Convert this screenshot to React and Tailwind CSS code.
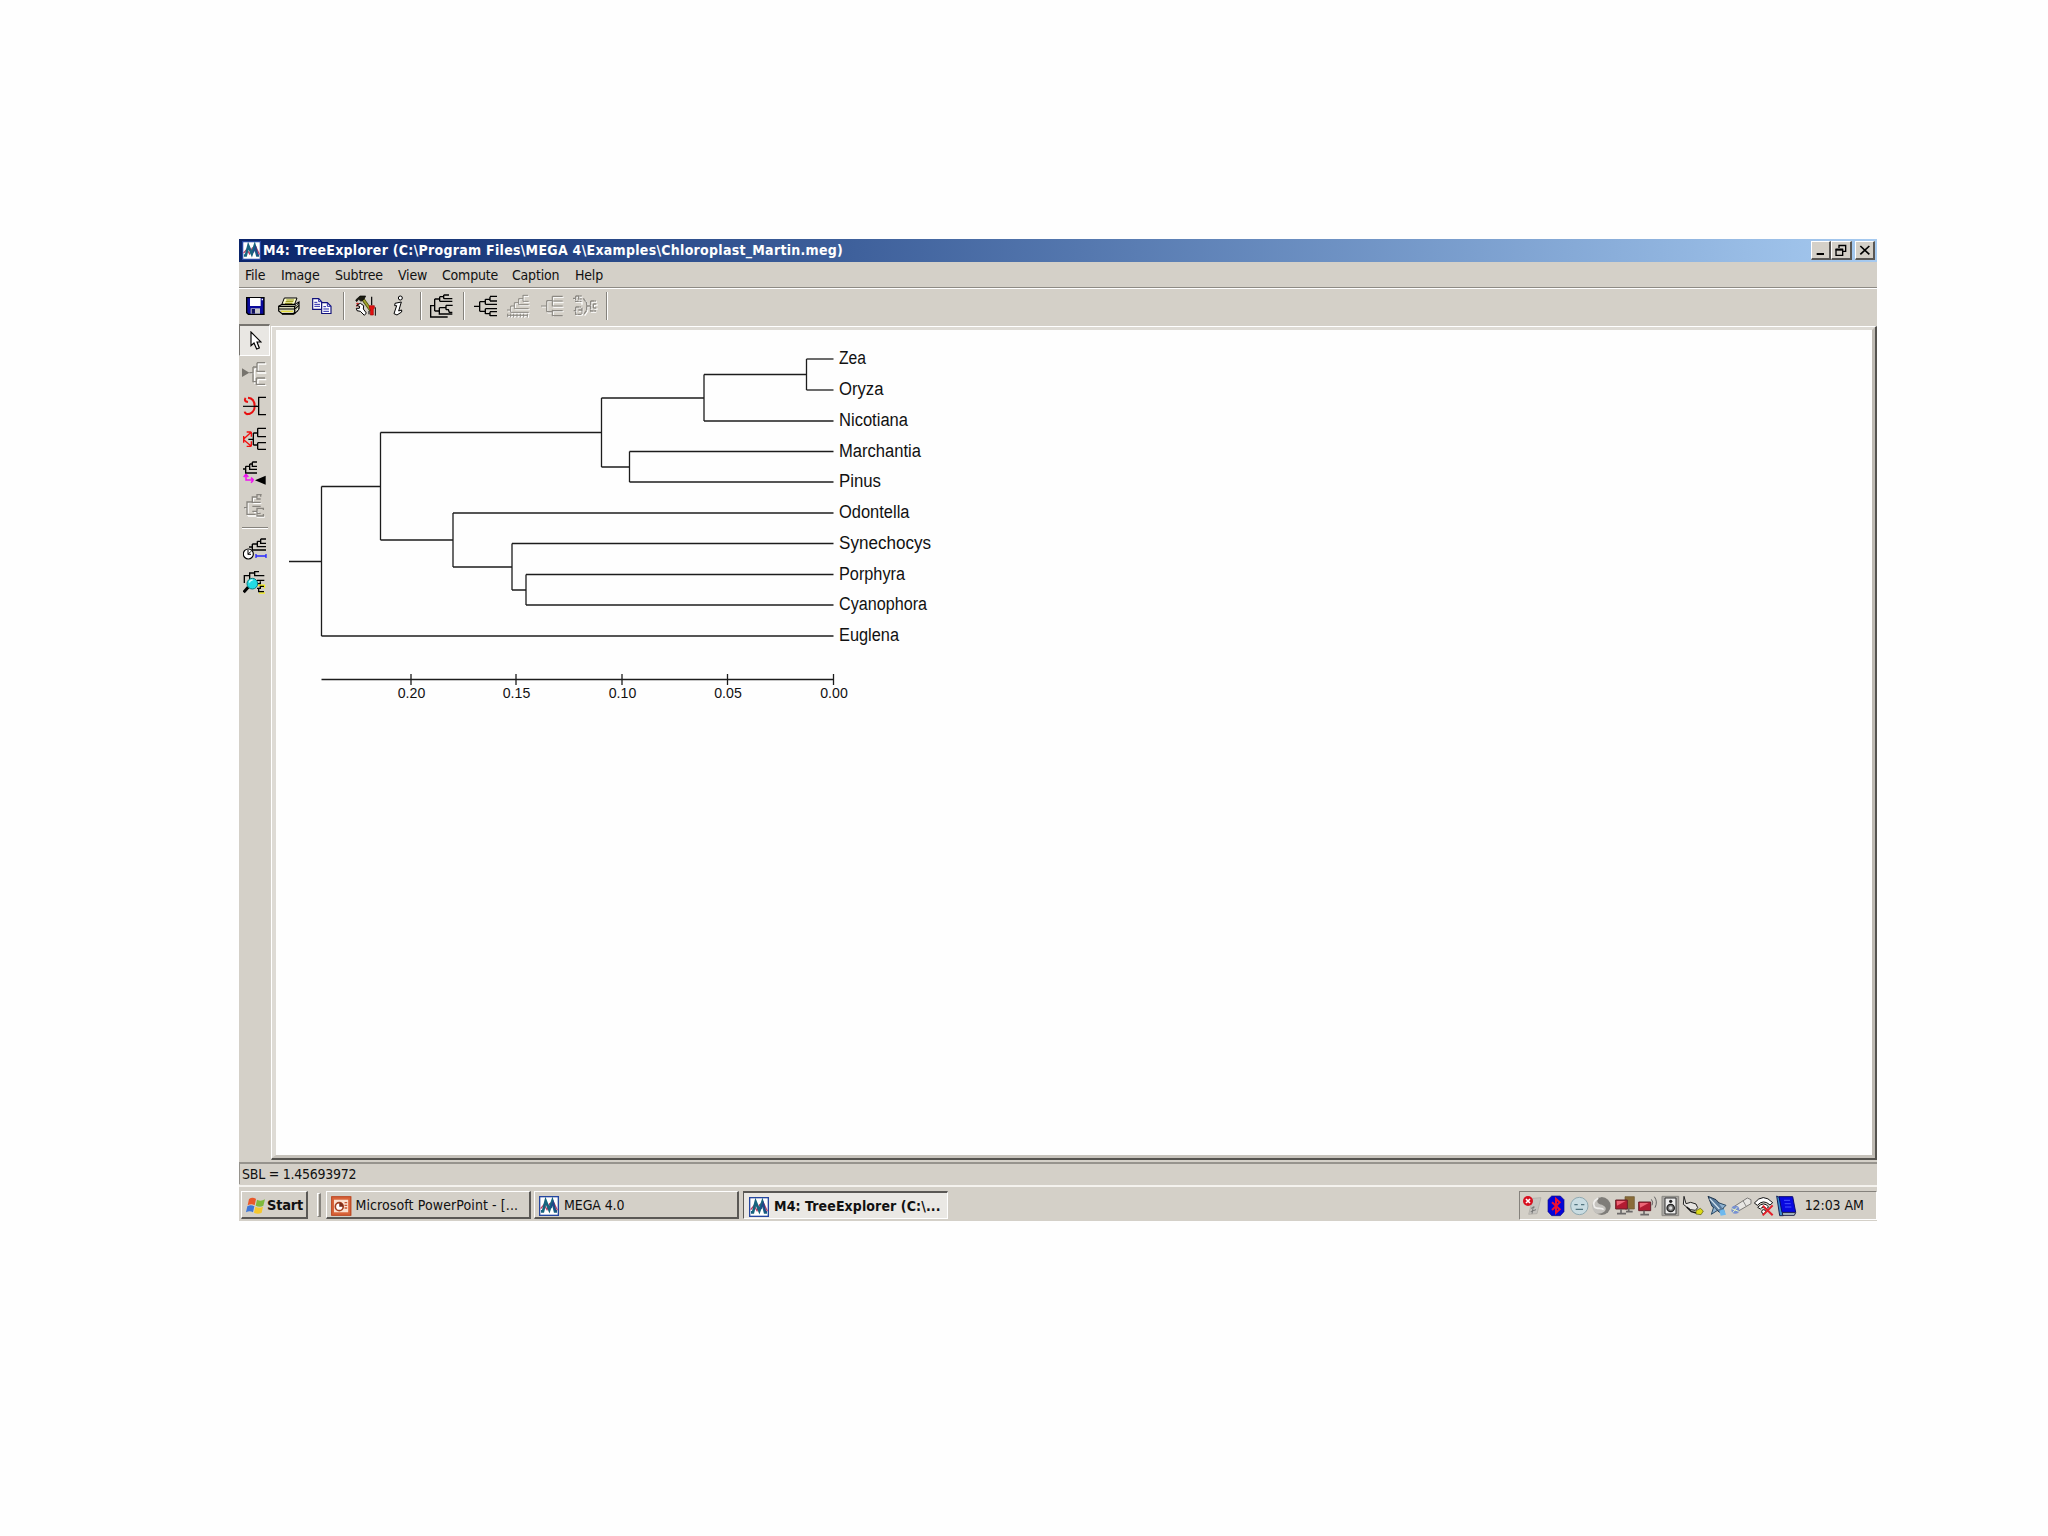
import React from 'react';

const menus = [
  { label: 'File', width: 'w-[36px]' },
  { label: 'Image', width: 'w-[54px]' },
  { label: 'Subtree', width: 'w-[63px]' },
  { label: 'View', width: 'w-[44px]' },
  { label: 'Compute', width: 'w-[70px]' },
  { label: 'Caption', width: 'w-[63px]' },
  { label: 'Help', width: 'w-[40px]' },
];

// Leaf rows of the tree: name, y of the branch, x where the branch starts
const taxa = [
  { name: 'Zea', y: 359, from: 806.5, length: 27 },
  { name: 'Oryza', y: 390, from: 806.5, length: 44.5 },
  { name: 'Nicotiana', y: 421, from: 704, length: 69 },
  { name: 'Marchantia', y: 451.5, from: 629.5, length: 82 },
  { name: 'Pinus', y: 482, from: 629.5, length: 42 },
  { name: 'Odontella', y: 513, from: 453, length: 70.5 },
  { name: 'Synechocys', y: 543.5, from: 512, length: 92 },
  { name: 'Porphyra', y: 574.5, from: 526, length: 66 },
  { name: 'Cyanophora', y: 605, from: 526, length: 88 },
  { name: 'Euglena', y: 636, from: 321.5, length: 60 },
];

// Inner nodes: vertical bar from top to bottom, stem running left to the parent
const nodes = [
  { x: 806.5, top: 359, bottom: 390, stem: 374.5, parent: 704 },
  { x: 704, top: 374.5, bottom: 421, stem: 398, parent: 601.5 },
  { x: 629.5, top: 451.5, bottom: 482, stem: 467, parent: 601.5 },
  { x: 601.5, top: 398, bottom: 467, stem: 432.5, parent: 380.5 },
  { x: 526, top: 574.5, bottom: 605, stem: 590, parent: 512 },
  { x: 512, top: 543.5, bottom: 590, stem: 567, parent: 453 },
  { x: 453, top: 513, bottom: 567, stem: 540, parent: 380.5 },
  { x: 380.5, top: 432.5, bottom: 540, stem: 486.5, parent: 321.5 },
  { x: 321.5, top: 486.5, bottom: 636, stem: 561.5, parent: 289 },
];

const ticks = [
  { x: 411, label: '0.20' },
  { x: 516, label: '0.15' },
  { x: 622, label: '0.10' },
  { x: 727.5, label: '0.05' },
  { x: 833.5, label: '0.00' },
];

// Icons are drawn on a grid of three units per pixel
const Icon = ({ w, h, children, className = '' }) => (
  <svg
    width={w / 3}
    height={h / 3}
    viewBox={`0 0 ${w} ${h}`}
    fill="none"
    stroke="#000"
    strokeWidth="4"
    className={`block shrink-0 ${className}`}
  >
    {children}
  </svg>
);

const SaveIcon = () => (
  <Icon w={56} h={54}>
    <path d="M2 2H54V52H7L2 47Z" fill="#0a0a9c" />
    <path d="M12 3H44V27H12Z" fill="#fff" stroke="none" />
    <path d="M14 34H42V50H14Z" fill="#c8c8c8" stroke="none" />
    <path d="M17 36H27V50H17Z" fill="#101060" stroke="none" />
    <path d="M47 5H51V10H47Z" fill="#fff" stroke="none" />
  </Icon>
);

const PrintIcon = () => (
  <Icon w={66} h={56}>
    <path d="M19 3H57L49 24H11Z" fill="#ffffd0" strokeWidth="3" />
    <path d="M25 9H48M23 14H46M21 19H43" stroke="#909000" strokeWidth="3" />
    <path d="M2 28L12 22H52L63 15V35L49 50H12L2 42Z" fill="#d8d8b8" strokeWidth="3.5" />
    <path d="M2 28H50L63 17M50 28V50M3 36H50M52 35L63 25" strokeWidth="3.5" />
    <path d="M9 43H45" stroke="#e4dc20" strokeWidth="3" />
    <path d="M12 51H46L60 39" strokeWidth="5" />
    <path d="M53 24L58 20M53 44L60 36" stroke="#fff" strokeWidth="3" />
  </Icon>
);

const CopyIcon = () => (
  <Icon w={60} h={50}>
    <path d="M2 2H20L29 11V34H2Z" fill="#fff" stroke="#111178" strokeWidth="3.5" />
    <path d="M20 2V11H29M7 13H16M7 19H24M7 25H24" stroke="#2424a8" strokeWidth="3" />
    <path d="M29 14H46L57 25V47H29Z" fill="#fff" stroke="#111178" strokeWidth="3.5" />
    <path d="M46 14V25H57M34 26H42M34 33H51M34 40H51" stroke="#2424a8" strokeWidth="3" />
  </Icon>
);

const ToolsIcon = () => (
  <Icon w={66} h={64}>
    <path d="M24 13L48 47" stroke="#4d5010" strokeWidth="10" />
    <path d="M24 12L45 43" stroke="#a3a52c" strokeWidth="5" />
    <path d="M2 15L15 3H32L27 13L18 19L11 13L5 20Z" fill="#1b1b10" strokeWidth="2" />
    <path d="M5 24L22 44M4 34L12 25" stroke="#d01818" strokeWidth="4" />
    <path d="M5 31L16 25L26 32L25 42L34 54L28 61L16 49L6 47L4 40L13 40L14 34Z" fill="#fff" strokeWidth="3" />
    <path d="M50 5V31" strokeWidth="3.5" />
    <path d="M43 32H58V39L55 44V60H46V44L43 39Z" fill="#e41010" stroke="#a00808" strokeWidth="2" />
    <path d="M61 37V62M42 48V58" strokeWidth="3" />
  </Icon>
);

const InfoIcon = () => (
  <Icon w={34} h={64}>
    <circle cx="22" cy="9" r="6" fill="#fff" strokeWidth="3" />
    <path d="M6 25L25 21L17 48L26 45V51L12 60L3 56L11 32L5 32Z" fill="#fff" strokeWidth="3" />
  </Icon>
);

const CurvedTreeIcon = () => (
  <Icon w={72} h={74}>
    <path d="M13 35H2V69H53M14 15V51M14 51H28M14 15H29M28 41V60H67M28 41H48M29 8V22M29 8H41M41 3V14M41 3H57M41 14H67M29 22H67M48 34V47M48 34H68M48 47H55L58 55H67" />
  </Icon>
);

const CladogramIcon = () => (
  <Icon w={70} h={66}>
    <path d="M0 34H17M17 20V49M17 20H34M34 13V28M34 13H48M48 5V18M48 4H70M48 18H70M34 28H70M17 49H34M34 41V57M34 41H70M34 56H48M48 50V63M48 50H70M48 62H70" />
  </Icon>
);

const DisabledTimeTree = () => (
  <Icon w={68} h={72}>
    <g stroke="#fff" transform="translate(3 3)">
      <path d="M0 48H11M11 36V55H65M11 36H22M22 26V44H65M22 26H35M35 14V32H65M35 14H48M48 3V22H65M48 4H63M0 59V70M10 59V70M20 59V70M30 59V70M40 59V70M50 59V70M61 59V70M0 64H63" strokeWidth="3" />
    </g>
    <path d="M0 48H11M11 36V55H65M11 36H22M22 26V44H65M22 26H35M35 14V32H65M35 14H48M48 3V22H65M48 4H63M2 59V70M11 59V70M20 59V70M30 59V70M40 59V70M50 59V70M61 59V70M0 64H63" stroke="#8c8983" strokeWidth="3" />
  </Icon>
);

const DisabledTree = () => (
  <Icon w={68} h={68}>
    <path d="M3 36H20M20 20V54M20 20H37M37 7V37H68M37 7H68M37 23H68M20 54H37M37 47V67H68M37 50H68" stroke="#fff" strokeWidth="3" />
    <path d="M0 33H17M17 17V50M17 17H34M34 4V33H65M34 4H65M34 18H65M17 50H34M34 44V62H65M34 47H65" stroke="#8c8983" strokeWidth="3.5" />
  </Icon>
);

const DisabledSplitTree = () => (
  <Icon w={74} h={66}>
    <path
      d="M4 13H10M10 6V21H28M10 6H28M19 6V15H28M27 21V29M5 48H10M10 38V60H29M10 38H26M18 48H30M29 40V60M34 13L44 27V49L35 62M44 35H56M56 21V51H70M56 21H72M64 30H74M64 42H74M64 30V42"
      stroke="#fff"
      strokeWidth="4"
    />
    <path
      d="M0 10H8M8 3V19H26M8 3H26M17 3V12H26M2 47H8M8 36V58H27M8 36H24M16 45H27M27 38V56M31 10L41 24V46L32 59M41 33H53M53 18V48H69M53 18H69M61 27H70M61 39H70M61 27V39"
      stroke="#8c8983"
      strokeWidth="4"
      strokeDasharray="12 1.5"
    />
  </Icon>
);

const PointerIcon = () => (
  <Icon w={36} h={60}>
    <path d="M3 3V44L12 36L20 54L28 51L21 33H33Z" fill="#fff" strokeWidth="3.5" />
  </Icon>
);

const PlaceRootIcon = () => (
  <Icon w={74} h={76}>
    <path d="M29 38H38M38 24V66H48M38 24H48M48 9V36H73M48 9H73M48 56V74H73M48 56H73" stroke="#fff" />
    <path d="M0 22V48L22 35Z" fill="#77746e" stroke="none" />
    <path d="M22 35H33M33 18V62H43M33 18H45M45 5V31H69M45 5H69M43 51V70H69M43 51H69" stroke="#88857f" strokeWidth="4" />
  </Icon>
);

const FlipIcon = () => (
  <Icon w={70} h={62}>
    <path d="M69 4H47V56H69M38 31H47" />
    <path d="M15 5C28 6 35 16 35 31C35 47 24 55 11 55" stroke="#e81010" strokeWidth="6" />
    <path d="M15 18C6 17 3 12 8 6M5 47C6 53 12 56 20 53" stroke="#e81010" strokeWidth="6" />
    <path d="M0 31H42" strokeWidth="3.5" />
  </Icon>
);

const SwapIcon = () => (
  <Icon w={70} h={74}>
    <path d="M16 37H31M31 18V54M31 18H44M44 4V29M44 4H69M44 29H69M31 54H44M44 47V67M44 47H69M44 67H69" />
    <path d="M3 35L25 15M25 15H11M25 15V29M3 39L25 58M25 58H11M25 58V43M2 27V47" stroke="#f01010" />
  </Icon>
);

const CompressIcon = () => (
  <Icon w={70} h={72}>
    <path d="M0 24H8M8 16V36H42M8 16H20M20 9V25H42M20 9H28M28 3V16H42M28 3H42" />
    <path d="M9 42V57H31M9 40L2 48M9 40L16 48M32 57L24 50M32 57L24 65" stroke="#f010f0" strokeWidth="4.5" />
    <path d="M36 58L68 44V71Z" fill="#000" stroke="none" />
  </Icon>
);

const DisabledCompress = () => (
  <Icon w={66} h={72}>
    <path d="M3 44H12V26H28V12H42M12 66H40M28 28H52M12 44V66M30 56H46M40 50V69H62" stroke="#fff" />
    <path
      d="M0 41H9V24H25V9H39V2H53M9 41V61H35M25 9V25H50M39 9V15H50M50 2V8M25 52H39V43H58V48M39 52V66H58V60M39 58H50M25 37H50"
      stroke="#88857f"
      strokeWidth="4"
    />
  </Icon>
);

const ClockTreeIcon = () => (
  <Icon w={72} h={68}>
    <path d="M18 27H28M28 18V36H69M28 18H43M43 10V26H69M43 10H53M53 3V16H69M53 3H69" />
    <circle cx="16" cy="48" r="15" fill="#fff" strokeWidth="3.5" />
    <path d="M15 36V49L24 40M15 49H24" strokeWidth="3" />
    <path d="M39 48V60M69 48V60M39 54H69" stroke="#2828ff" />
  </Icon>
);

const FindTreeIcon = () => (
  <Icon w={68} h={68}>
    <path d="M44 43H64V52M48 66H66" stroke="#f4ee20" strokeWidth="5" />
    <path d="M4 24V14H20V6H35V2H48M35 6V14H64M4 24V36M20 14V24M42 28H64M42 38H52V31M42 52H52V46H63M47 52V62H63" />
    <path d="M2 64L16 48" strokeWidth="9" />
    <circle cx="28" cy="38" r="16" fill="#22dce4" stroke="#087b83" strokeWidth="3" />
    <path d="M19 35C20 29 24 27 29 27" stroke="#c8ffff" strokeWidth="4" />
  </Icon>
);

const MegaIcon = ({ size = 'h-[20px] w-[20px]' }) => (
  <svg viewBox="0 0 60 60" className={`${size} block shrink-0`}>
    <rect x="2" y="2" width="56" height="56" fill="#fff" stroke="#2446a0" strokeWidth="4" />
    <path d="M5 38L15 26L24 41L32 23L43 17L55 43" fill="none" stroke="#c23b62" strokeWidth="4" />
    <path d="M6 46H12L20 15L31 41L40 15L48 46H54" fill="none" stroke="#17647f" strokeWidth="8" />
    <path d="M36 36L43 18L50 47" fill="none" stroke="#22438c" strokeWidth="4" />
  </svg>
);

const PowerPointIcon = () => (
  <svg viewBox="0 0 62 60" className="block h-[20px] w-[20.5px] shrink-0">
    <rect x="1" y="1" width="60" height="58" fill="#d9643a" />
    <rect x="2" y="2" width="58" height="56" fill="none" stroke="#b8431f" strokeWidth="3" />
    <path d="M9 11H52V49H9Z" fill="#fbe0d0" />
    <circle cx="25" cy="32" r="12" fill="#fff" stroke="#a43f20" strokeWidth="5" />
    <path d="M25 32V20A12 12 0 0 1 37 32Z" fill="#7b2d1b" />
    <path d="M41 20H49M41 28H49M41 36H49" stroke="#c75430" strokeWidth="4" />
  </svg>
);

const WindowsFlag = () => (
  <svg viewBox="0 0 60 54" className="block h-[18px] w-[20px] shrink-0">
    <path d="M9 6C17 1 23 2 30 6L26 25C19 21 13 21 5 25Z" fill="#e9592b" />
    <path d="M33 8C41 12 48 12 57 7L52 26C45 31 37 30 29 26Z" fill="#7fb93b" />
    <path d="M4 28C12 23 18 24 25 28L21 46C14 42 8 42 0 46Z" fill="#3d76d8" />
    <path d="M28 29C36 33 43 33 51 29L47 47C39 52 31 51 24 47Z" fill="#f5c72c" />
  </svg>
);

const tools = [SaveIcon, PrintIcon, CopyIcon, null, ToolsIcon, InfoIcon, null, CurvedTreeIcon, null, CladogramIcon, DisabledTimeTree, DisabledTree, DisabledSplitTree, null];
const sideTools = [PlaceRootIcon, FlipIcon, SwapIcon, CompressIcon, DisabledCompress, null, ClockTreeIcon, FindTreeIcon];

const CaptionButton = ({ children, className = '' }) => (
  <div className={`flex h-[19px] items-center justify-center border border-r-2 border-b-2 border-t-white border-r-[#5a5855] border-b-[#5a5855] border-l-white bg-[#d4d0c8] ${className}`}>
    {children}
  </div>
);

const TitleBar = () => (
  <div className="flex h-[23px] items-center bg-linear-to-r from-[#0a246a] to-[#a6caf0] pr-[2px] pl-[3px]">
    <MegaIcon size="h-[19px] w-[19px]" />
    <span className="ml-[2px] text-[14px] font-bold tracking-[0.275px] text-white">
      M4: TreeExplorer (C:\Program Files\MEGA 4\Examples\Chloroplast_Martin.meg)
    </span>
    <CaptionButton className="ml-auto w-[20px]">
      <Icon w={30} h={36}>
        <path d="M2 30H24" strokeWidth="6" />
      </Icon>
    </CaptionButton>
    <CaptionButton className="w-[21px]">
      <Icon w={36} h={38}>
        <path d="M12 12V4H32V22H24M11 5H33" />
        <path d="M3 16H23V34H3Z" />
        <path d="M2 17H24" strokeWidth="6" />
      </Icon>
    </CaptionButton>
    <CaptionButton className="ml-[3px] w-[20px]">
      <Icon w={36} h={36}>
        <path d="M4 6L31 31M31 6L4 31" strokeWidth="5" />
      </Icon>
    </CaptionButton>
  </div>
);

const MenuBar = () => (
  <div className="flex h-[25px] items-center pt-px pl-[6px]">
    {menus.map((menu) => (
      <span key={menu.label} className={`${menu.width} text-[14px] tracking-[-0.2px] whitespace-nowrap`}>
        {menu.label}
      </span>
    ))}
  </div>
);

const ToolBar = () => (
  <div className="flex h-[36px] items-center border-t border-[#8d8a84] pt-px shadow-[inset_0_1px_0_#ffffff]">
    {tools.map((Tool, index) =>
      Tool ? (
        <div key={index} className="flex h-[32px] w-[33.4px] items-center justify-center">
          <Tool />
        </div>
      ) : (
        <div key={index} className="flex w-[9.8px] justify-center">
          <div className="h-[28px] w-[2px] border-r border-l border-r-white border-l-[#85827c]" />
        </div>
      )
    )}
  </div>
);

const SideBar = () => (
  <div className="w-[32px] shrink-0">
    <div className="mt-px mb-px flex h-[32px] w-[31px] items-center justify-center border border-t-2 border-t-[#77746f] border-r-white border-b-white border-l-[#77746f] bg-[#e9e7e3] pl-[2px]">
      <PointerIcon />
    </div>
    {sideTools.map((Tool, index) =>
      Tool ? (
        <div key={index} className="flex h-[33px] w-[31px] items-center justify-center">
          <Tool />
        </div>
      ) : (
        <div key={index} className="flex h-[11px] items-center">
          <div className="ml-[3px] h-[2px] w-[26px] border-t border-b border-t-[#85827c] border-b-white" />
        </div>
      )
    )}
  </div>
);

const TreeChart = () => (
  <svg
    viewBox="276 330 700 400"
    width="700"
    height="400"
    fill="none"
    stroke="#1c1c1c"
    strokeWidth="1.3"
    className="block"
  >
    {nodes.map((node) => (
      <path key={node.x} d={`M${node.parent} ${node.stem}H${node.x}M${node.x} ${node.top}V${node.bottom}`} />
    ))}
    {taxa.map((taxon) => (
      <path key={taxon.name} d={`M${taxon.from} ${taxon.y}H833.5`} />
    ))}
    <path d="M321.5 679.5H834" />
    {ticks.map((tick) => (
      <path key={tick.label} d={`M${tick.x} 674V685`} />
    ))}
    <g fill="#111" stroke="none" fontSize="17.6">
      {taxa.map((taxon) => (
        <text
          key={taxon.name}
          x="839"
          y={taxon.y + 5}
          textLength={taxon.length}
          lengthAdjust="spacingAndGlyphs"
        >
          {taxon.name}
        </text>
      ))}
    </g>
    <g fill="#111" stroke="none" fontSize="15" textAnchor="middle">
      {ticks.map((tick) => (
        <text key={tick.label} x={tick.x + 0.5} y="698.3" textLength="27.5" lengthAdjust="spacingAndGlyphs">
          {tick.label}
        </text>
      ))}
    </g>
  </svg>
);

const TaskButton = ({ icon, label, active, className = '' }) => (
  <div
    className={
      active
        ? `flex h-[28px] items-center border border-t-2 border-t-[#5a5855] border-r-white border-b-white border-l-[#5a5855] bg-[#eae8e4] pt-[2px] pl-[5px] font-bold ${className}`
        : `flex h-[28px] items-center border border-r-2 border-b-2 border-t-white border-r-[#5a5855] border-b-[#5a5855] border-l-white pt-[2px] pl-[4px] ${className}`
    }
  >
    {icon}
    {label}
  </div>
);

const TrayIcons = () => (
  <svg viewBox="0 0 830 66" width="276.7" height="22" fill="none" className="block shrink-0">
    {/* unplugged device */}
    <path d="M32 10L57 8L45 56L20 58Z" fill="#c5c3bf" stroke="#aaa7a2" strokeWidth="2" />
    <path d="M27 40L38 36M26 50L42 44M34 34L30 56" stroke="#777" strokeWidth="3" />
    <circle cx="18" cy="18" r="15" fill="#d81020" />
    <path d="M12 12L24 24M24 12L12 24" stroke="#fff" strokeWidth="5" />
    {/* bluetooth */}
    <path d="M89 3H115L126 14V50L115 62H89L78 50V14Z" fill="#0505d8" stroke="#101080" strokeWidth="2" />
    <path d="M90 22L113 43L102 53V12L113 22L90 45" stroke="#f01030" strokeWidth="6" />
    {/* messenger face */}
    <circle cx="172" cy="33" r="26" fill="#c9dce2" stroke="#8fa8b0" strokeWidth="3" />
    <path d="M157 29H167M177 29H187M161 43H183" stroke="#52747f" strokeWidth="3.5" />
    {/* sphere */}
    <circle cx="239" cy="33" r="27" fill="#7f7d79" />
    <path d="M239 6A27 27 0 0 0 224 56C240 58 256 48 250 37C244 27 226 30 226 19C226 11 234 7 239 6Z" fill="#c4c2be" />
    <path d="M228 10C216 17 213 27 217 35C224 45 240 36 245 44" stroke="#efeeec" strokeWidth="5" />
    {/* network monitors */}
    <path d="M309 5H337V42H309Z" fill="#8a6c38" stroke="#6b5730" strokeWidth="2" />
    <path d="M281 15H316V42H281Z" fill="#b21b32" stroke="#662029" strokeWidth="3" />
    <path d="M284 18H311L285 32Z" fill="#ed6576" />
    <path d="M297 43V54M285 56H312M320 40V50M312 50H332" stroke="#6b6969" strokeWidth="5" />
    {/* wireless monitor */}
    <path d="M350 21H386V47H350Z" fill="#b21b32" stroke="#662029" strokeWidth="3" />
    <path d="M353 24H380L354 38Z" fill="#ed6576" />
    <path d="M366 47V57M355 59H381" stroke="#6b6969" strokeWidth="5" />
    <path d="M388 13Q395 21 390 31M397 5Q408 20 399 38" stroke="#636363" strokeWidth="3" />
    {/* speaker */}
    <path d="M420 4H470V62H420Z" fill="#aaa8a4" stroke="#8a8883" strokeWidth="3" />
    <path d="M429 9H462V57H429Z" fill="#eee" stroke="#333" strokeWidth="3" />
    <circle cx="446" cy="39" r="11" fill="#777" stroke="#222" strokeWidth="4" />
    <circle cx="446" cy="39" r="5" fill="#ddd" />
    <circle cx="446" cy="19" r="5" fill="#222" />
    {/* power cable */}
    <path d="M486 4L492 26L506 22L522 27L527 38L520 46L506 44L494 36L484 28L486 4" fill="#e6e4e0" stroke="#222" strokeWidth="3" />
    <path d="M494 36L508 50L524 54" stroke="#111" strokeWidth="4" />
    <path d="M522 47L535 40L544 48L537 59L522 57Z" fill="#ddda18" stroke="#55530b" strokeWidth="2" />
    {/* rocket */}
    <path d="M558 4L582 14L602 36L607 54L593 52L570 34Z" fill="#57799b" stroke="#1e344b" strokeWidth="3" />
    <path d="M575 36L568 58L585 47M589 23L612 31L602 41" fill="#8fb2d1" stroke="#294965" strokeWidth="3" />
    <path d="M563 11L592 42" stroke="#d2e2ed" strokeWidth="4" />
    <path d="M592 47L596 62L612 59L606 42Z" fill="#6db9ef" />
    {/* usb plug */}
    <path d="M634 36L676 9L687 14V26L646 50Z" fill="#e7e6e3" stroke="#7b7976" strokeWidth="3" />
    <circle cx="640" cy="44" r="12" fill="#7890d2" />
    <path d="M629 41L650 49M632 53L645 37" stroke="#eaf6bd" strokeWidth="3" />
    <path d="M663 17L672 33" stroke="#888" strokeWidth="3" />
    {/* disconnected wifi */}
    <path d="M697 24Q723 -8 752 23L744 30Q724 11 706 31Z" fill="#fff" stroke="#111" strokeWidth="3" />
    <path d="M707 37Q725 17 740 36L733 41Q724 31 715 42Z" fill="#fff" stroke="#111" strokeWidth="3" />
    <circle cx="725" cy="50" r="6" fill="#fff" stroke="#111" strokeWidth="3" />
    <path d="M722 32L752 61M752 31L722 61" stroke="#e4202b" strokeWidth="6" />
    {/* notebook */}
    <path d="M764 3L774 8L784 62H773Z" fill="#3b8dd0" stroke="#152455" strokeWidth="3" />
    <path d="M771 5H812L821 52H780Z" fill="#0808e0" stroke="#090970" strokeWidth="3" />
    <path d="M781 53H821L817 61H782Z" fill="#b8cccf" stroke="#20204b" strokeWidth="3" />
    <path d="M786 16H804M788 26H806M789 36H808" stroke="#4753ff" strokeWidth="3" />
  </svg>
);

const TaskBar = () => (
  <div className="flex h-[36px] items-start border-t-2 border-[#f4f2ee] bg-[#d4d0c8] pt-[4px] pl-[2px] text-[14px] whitespace-nowrap">
    <TaskButton
      className="w-[67px]"
      icon={<WindowsFlag />}
      label={<span className="ml-px text-[14.5px] font-bold tracking-[-0.2px]">Start</span>}
    />
    <div className="mt-[2px] mr-[5px] ml-[9px] h-[24px] w-[4px] border border-r-2 border-t-white border-r-[#85827c] border-b-[#85827c] border-l-white" />
    <TaskButton
      className="w-[205px]"
      icon={<PowerPointIcon />}
      label={<span className="ml-[4px] tracking-[0.1px]">Microsoft PowerPoint - [...</span>}
    />
    <TaskButton
      className="ml-[3px] w-[205px]"
      icon={<MegaIcon />}
      label={<span className="ml-[5px] tracking-[-0.1px]">MEGA 4.0</span>}
    />
    <TaskButton
      active
      className="ml-[4px] w-[205px]"
      icon={<MegaIcon />}
      label={<span className="ml-[5px] tracking-[0.1px]">M4: TreeExplorer (C:\...</span>}
    />
    <div className="ml-auto flex h-[29px] w-[358px] items-center border border-t-[#85827c] border-r-white border-b-white border-l-[#85827c] pl-[2px]">
      <TrayIcons />
      <span className="ml-[6px] tracking-[-0.1px]">12:03 AM</span>
    </div>
  </div>
);

const App = () => (
  <div className="h-[1536px] w-[2048px] overflow-hidden bg-[#fefefe] pt-[239px] pl-[239px] text-[#111]">
    <div className="flex h-[982px] w-[1638px] flex-col bg-[#d4d0c8] font-['DejaVu_Sans_Condensed','DejaVu_Sans',sans-serif]">
      <TitleBar />
      <MenuBar />
      <ToolBar />
      <div className="flex h-[837px]">
        <SideBar />
        <div className="mt-[3px] grow border border-r-2 border-b-2 border-t-white border-r-[#55534f] border-b-[#55534f] border-l-white">
          <div className="h-full border-t-3 border-r-3 border-b-3 border-l-4 border-t-[#dedbd5] border-r-[#bebab3] border-b-[#c6c2bb] border-l-[#dedbd5] bg-[#fefefe] font-['Liberation_Sans',Arial,sans-serif]">
            <TreeChart />
          </div>
        </div>
      </div>
      <div className="mt-[2px] flex h-[22px] items-center border-t-2 border-l border-[#96938d] pl-[2px] text-[14px]">
        <span className="tracking-[-0.25px]">SBL = 1.45693972</span>
      </div>
      <div className="mt-px">
        <TaskBar />
      </div>
    </div>
  </div>
);

export default App;
